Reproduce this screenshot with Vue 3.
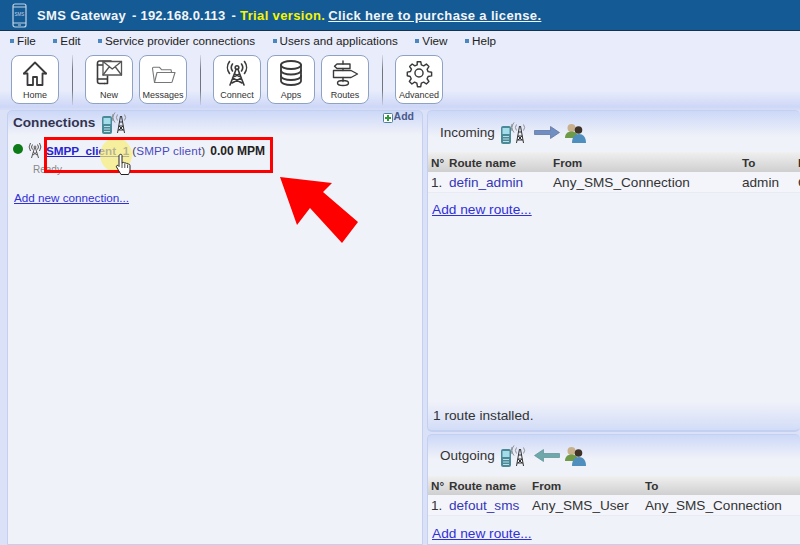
<template>
  <div class="page">
    <header class="topbar">
      <svg class="device" width="16" height="25" viewBox="0 0 16 25" fill="none" stroke="#c4d4e4" stroke-width="1.2">
        <rect x="1" y="1" width="13" height="23" rx="2" />
        <path d="M1 4h13M1 20h13M6 22h3" />
        <text x="7.500" y="13" font-size="4.500" fill="#c4d4e4" stroke="none" text-anchor="middle" font-family="Liberation Sans">SMS</text>
      </svg>
      <span class="title">SMS Gateway</span>
      <span class="title ip">- 192.168.0.113</span>
      <span class="title trial"><i>-</i> Trial version.</span>
      <a class="title buy">Click here to purchase a license.</a>
    </header>

    <nav class="menu">
      <span v-for="m in menu" :key="m" class="menu-item">{{ m }}</span>
    </nav>

    <div class="toolbar">
      <template v-for="(group, g) in toolbar" :key="g">
        <span v-if="g" class="sep"></span>
        <div class="tool-group">
          <button v-for="b in group" :key="b.label" class="tool">
            <svg width="30" height="30" viewBox="0 0 30 30" fill="none" stroke="#3a3a3a" stroke-width="1.6" stroke-linejoin="round" stroke-linecap="round">
              <g v-if="b.label === 'Home'" stroke-width="1.800">
                <path d="M4 15.500 15 4.500l11 11" />
                <path d="M4 15.500h3.500V27h5.500v-8h4v8h5.500V15.500H26" />
              </g>
              <g v-else-if="b.label === 'New'">
                <path d="M10.500 25.500H5.500a2 2 0 0 1-2-2V5a2 2 0 0 1 2-2H17" />
                <path d="M3.500 7H9M3.500 21h10M13.500 18v7.500h-3" />
                <rect x="9" y="3.500" width="18.500" height="13.500" stroke="#555" stroke-width="1.300" fill="#fff" />
                <path d="m9 3.500 9.250 7.500 9.250-7.500M9 17l6.500-8.500M27.500 17 21 8.500" stroke="#555" stroke-width="1.300" />
              </g>
              <g v-else-if="b.label === 'Messages'" stroke="#777" stroke-width="1.100">
                <path d="M6.500 24.500 4.500 10.500c0-.7.400-1.200 1-1.200h6l2 2.400h9.500l.5 2.500" />
                <path d="M6.500 24.500h16.500c.6 0 1-.3 1.200-.8l2.800-9.200H9L6.500 24.500z" />
              </g>
              <g v-else-if="b.label === 'Connect'">
                <circle cx="15" cy="9.500" r="1.800" />
                <path d="m14 11.500-6 15.500M16 11.500l6 15.500M10.500 20l9.500 5M19.500 20l-9.500 5M12.500 16l5 2.500M17.500 16l-5 2.500" />
                <path d="M10.500 6a6 6 0 0 0 0 7M19.500 6a6 6 0 0 1 0 7M7.500 3.500a10 10 0 0 0 0 12M22.500 3.500a10 10 0 0 1 0 12" />
              </g>
              <g v-else-if="b.label === 'Apps'" stroke-width="1.800">
                <ellipse cx="15" cy="7" rx="10" ry="4" />
                <path d="M5 7v16c0 2.200 4.500 4 10 4s10-1.800 10-4V7" />
                <path d="M5 12.500c0 2.200 4.500 4 10 4s10-1.800 10-4M5 18c0 2.200 4.500 4 10 4s10-1.800 10-4" />
              </g>
              <g v-else-if="b.label === 'Routes'" stroke-width="1.400">
                <path d="M13 3v3M13 10.500v2M13 19.500v4" />
                <path d="M7 6h13v4.500H7L4.500 8.250z" />
                <path d="M3.500 12.500H21l6.500 3.500-6.500 3.500H3.500z" />
                <ellipse cx="13" cy="25" rx="5.500" ry="2.500" />
              </g>
              <g v-else transform="translate(1.500 1.500) scale(.9)">
                <circle cx="15" cy="15" r="4.500" />
                <path d="M13 2.500h4l.6 3.500 2.600 1.100 3-2 2.800 2.800-2 3 1.100 2.600 3.900.7v4l-3.900.7-1.100 2.500 2 3-2.800 2.800-3-2-2.600 1.100-.7 3.900h-3.600l-.7-3.900-2.500-1.100-3 2-2.800-2.800 2-3-1.100-2.500L2 18v-4l3.500-.6 1.100-2.600-2-3 2.800-2.800 3 2 2.600-1.100z" />
              </g>
            </svg>
            <span>{{ b.label }}</span>
          </button>
        </div>
      </template>
    </div>

    <main class="content">
      <section class="panel connections">
        <div class="panel-head">
          <h2>Connections</h2>
          <svg class="gsm" width="26" height="22" viewBox="0 0 26 22">
            <use href="#gsm-icon" />
          </svg>
          <a class="add">
            <svg width="10" height="10" viewBox="0 0 10 10">
              <rect x=".5" y=".5" width="9" height="9" rx="1" fill="#fff" stroke="#4f7f9a" />
              <path d="M5 2v6M2 5h6" stroke="#2f9a3a" stroke-width="2" />
            </svg>
            <b>Add</b>
          </a>
        </div>
        <div class="conn">
          <span class="dot"></span>
          <svg class="tower" width="14" height="17" viewBox="0 0 14 17" fill="none" stroke="#555" stroke-width="1">
            <circle cx="7" cy="5" r="1" />
            <path d="M6.500 6 3.500 16M7.500 6l3 10M5 10l4 3M9 10l-4 3M4.500 2.500a4 4 0 0 0 0 5M9.500 2.500a4 4 0 0 1 0 5M2.500 1a7 7 0 0 0 0 8M11.500 1a7 7 0 0 1 0 8" />
          </svg>
          <div class="conn-text">
            <div class="conn-line">
              <a class="conn-name">SMPP_client_1</a>
              <span class="conn-type">(<em>SMPP client</em>)</span>
              <b class="rate">0.00 MPM</b>
            </div>
            <div class="status">Ready</div>
          </div>
        </div>
        <a class="link new-conn">Add new connection...</a>

        <!-- annotation drawn over the screenshot -->
        <div class="halo"></div>
        <div class="redbox"></div>
        <svg class="pointer" width="18" height="24" viewBox="0 0 18 24">
          <path d="M5 1.500c1-.6 2 0 2 1V10l1-.5c.8-.3 1.500 0 1.800.6.8-.4 1.600-.2 2 .5.800-.4 1.600-.1 2 .7.600-.100 1.200.3 1.200 1.200v4.500c0 2-1 3-1.500 4.500H6L1.500 14c-.5-1 .5-2 1.500-1.500L4 13.500V2.500c0-.4.500-.8 1-1z" fill="#fff" stroke="#222" stroke-width="1" />
          <path d="M7 10v5M9.800 10.500V15M12.600 11.500V15" stroke="#222" stroke-width=".8" fill="none" />
        </svg>
        <svg class="arrow" width="82" height="68" viewBox="0 0 82 68">
          <path d="M1 0 53 6 44 15 79 45 63 66 31 31 18 48z" fill="#fe0000" />
        </svg>
      </section>

      <div class="right">
        <section v-for="p in panels" :key="p.title" class="panel routes" :class="p.cls">
          <div class="route-head">
            <span class="route-title">{{ p.title }}</span>
            <svg width="26" height="22" viewBox="0 0 26 22"><use href="#gsm-icon" /></svg>
            <svg class="flow" width="26" height="13" viewBox="0 0 26 13">
              <path v-if="p.cls === 'in'" d="M.5 4.500h16V.5l9 6-9 6v-4H.5z" fill="#6f8fc4" stroke="#5a6f96" stroke-width=".7" />
              <path v-else d="M25.500 4.500h-16V.5l-9 6 9 6v-4h16z" fill="#6fa8aa" stroke="#5b8f92" stroke-width=".7" />
            </svg>
            <svg width="22" height="20" viewBox="0 0 22 20">
              <circle cx="6.500" cy="5" r="4" fill="#c9b08c" />
              <path d="M0 15c0-4.500 3-6.500 6.500-6.500S13 10.500 13 15z" fill="#6f9a48" />
              <circle cx="13.500" cy="7" r="3.800" fill="#3f3227" />
              <path d="M7 20c0-6 3-9 7-9s7 3 7 9z" fill="#4f8fbe" />
            </svg>
          </div>
          <table class="route-table">
            <colgroup>
              <col v-for="(w, i) in p.widths" :key="i" :style="{ width: w + 'px' }" />
            </colgroup>
            <thead>
              <tr><th v-for="h in p.headers" :key="h">{{ h }}</th></tr>
            </thead>
            <tbody>
              <tr>
                <td>1.</td>
                <td><a class="route-name">{{ p.name }}</a></td>
                <td>{{ p.from }}</td>
                <td>{{ p.to }}</td>
                <td v-if="p.extra">{{ p.extra }}</td>
              </tr>
            </tbody>
          </table>
          <a class="link new-route">Add new route...</a>
          <div v-if="p.foot" class="foot">{{ p.foot }}</div>
        </section>
      </div>
    </main>

    <svg width="0" height="0" class="defs">
      <defs>
        <g id="gsm-icon">
          <rect x="0" y="4" width="10" height="18" rx="2" fill="#4a8a98" />
          <rect x="1.500" y="6" width="7" height="6" fill="#a4dcea" />
          <path d="M2 14.500h6M2 17h6M2 19.500h6" stroke="#bcdde4" stroke-width="1" />
          <path d="M18.500 4l-3 17M19.500 4l3 17M17.500 10h3M16.800 14h4.400M16 18h6M17 14l4 4M21 14l-4 4" stroke="#333" stroke-width="1" fill="none" />
          <path d="M15.500 2.500a5 5 0 0 0 0 6M13 0.500a8 8 0 0 0 0 10M22.500 2.500a5 5 0 0 1 0 6M11 2a10 10 0 0 0 0 7" stroke="#888" stroke-width=".9" fill="none" />
        </g>
      </defs>
    </svg>
  </div>
</template>

<script setup>
const menu = ['File', 'Edit', 'Service provider connections', 'Users and applications', 'View', 'Help']

const toolbar = [
  [{ label: 'Home' }],
  [{ label: 'New' }, { label: 'Messages' }],
  [{ label: 'Connect' }, { label: 'Apps' }, { label: 'Routes' }],
  [{ label: 'Advanced' }],
]

const panels = [
  {
    title: 'Incoming',
    cls: 'in',
    headers: ['N°', 'Route name', 'From', 'To', 'Days'],
    widths: [18, 104, 189, 56, 80],
    name: 'defin_admin',
    from: 'Any_SMS_Connection',
    to: 'admin',
    extra: 'Only',
    foot: '1 route installed.',
  },
  {
    title: 'Outgoing',
    cls: 'out',
    headers: ['N°', 'Route name', 'From', 'To'],
    widths: [18, 83, 113, 233],
    name: 'defout_sms',
    from: 'Any_SMS_User',
    to: 'Any_SMS_Connection',
  },
]
</script>

<style>
html, body {
  margin: 0;
  overflow: hidden;
}
</style>

<style scoped>
.page {
  width: 800px;
  height: 545px;
  overflow: hidden;
  background: #e9edfb;
  font-family: "Liberation Sans", Arial, sans-serif;
  font-size: 11.7px;
  color: #222;
  display: flex;
  flex-direction: column;
}

.defs {
  position: absolute;
}

.topbar {
  height: 31px;
  flex: none;
  box-sizing: border-box;
  background: #145a94;
  border-bottom: 1px solid #12324e;
  padding-left: 12px;
  display: flex;
  align-items: center;
  white-space: pre;
}
.device {
  margin-right: 9px;
}
.title {
  font-size: 13px;
  font-weight: bold;
  color: #f2f5f8;
  letter-spacing: 0.35px;
}
.ip {
  margin-left: 6px;
  letter-spacing: 0.2px;
}
.trial {
  margin-left: 6px;
  color: #f6f600;
}
.trial i {
  font-style: normal;
  color: #f2f5f8;
}
.buy {
  margin-left: 3px;
  text-decoration: underline;
}

.menu {
  height: 19px;
  flex: none;
  padding-left: 10px;
  background: #e9edfb;
  display: flex;
  align-items: center;
  gap: 17.500px;
}
.menu-item {
  display: flex;
  align-items: center;
  gap: 3px;
}
.menu-item::before {
  content: "";
  width: 4px;
  height: 4px;
  background: #4a86c0;
}

.toolbar {
  height: 60px;
  flex: none;
  box-sizing: border-box;
  padding: 5px 0 0 11px;
  background: linear-gradient(#e9edfb 0, #e9edfb 40px, #cdd7f7 57px, #d7def6 60px);
  display: flex;
  gap: 12.500px;
}
.tool-group {
  display: flex;
  gap: 6px;
}
.sep {
  width: 1px;
  height: 50px;
  background: linear-gradient(#d8dcea, #70747e 30%, #70747e 70%, #c8cee0);
}
.tool {
  width: 48px;
  height: 49px;
  box-sizing: border-box;
  padding: 2px 0 0;
  background: #fff;
  border: 1px solid #8ea3c4;
  border-radius: 8px;
  font-family: inherit;
  font-size: 9px;
  color: #333;
  display: flex;
  flex-direction: column;
  align-items: center;
  gap: 2px;
}

.content {
  flex: 1;
  min-height: 0;
  padding: 0 0 0 7px;
  background: #dbe2f7;
  display: flex;
  gap: 4px;
}
.panel {
  position: relative;
  box-sizing: border-box;
  background: #f0f2f9;
  border: 1px solid #c4d0f0;
  border-radius: 5px 5px 0 0;
  background-image: linear-gradient(#ccd8f8 0, #f0f2f9 24px);
}
.connections {
  width: 416px;
}
.panel-head {
  display: flex;
  align-items: flex-start;
  padding: 4px 0 0 5px;
  height: 28px;
  box-sizing: border-box;
}
.panel-head h2 {
  margin: 0;
  font-size: 13.600px;
  font-weight: bold;
  line-height: 15px;
  color: #333350;
}
.gsm {
  margin: -3px 0 0 7px;
}
.add {
  margin-left: auto;
  margin-right: 8px;
  margin-top: -4px;
  height: 10px;
  display: flex;
  align-items: flex-start;
  gap: 1px;
  font-size: 10.500px;
  line-height: 10px;
  color: #4a5a8a;
}
.add svg {
  margin-top: 2px;
}
.conn {
  display: flex;
  align-items: flex-start;
  padding-left: 5px;
  margin-top: 4px;
}
.dot {
  width: 10px;
  height: 10px;
  margin: 1px 5px 0 0;
  border-radius: 50%;
  background: #0c7a16;
}
.tower {
  margin-top: -1px;
}
.conn-text {
  margin-left: 4px;
}
.conn-line {
  display: flex;
  align-items: baseline;
  white-space: pre;
  height: 16px;
  line-height: 16px;
}
.conn-name {
  color: #2525d0;
  font-weight: bold;
  text-decoration: underline;
}
.conn-type {
  margin-left: 3px;
  color: #444;
  letter-spacing: 0.15px;
}
.conn-type em {
  font-style: normal;
  color: #4a4ac0;
}
.rate {
  margin-left: 5px;
  font-size: 12px;
  color: #222;
}
.status {
  margin: 5px 0 0 -13px;
  font-size: 10px;
  color: #888;
}
.link {
  display: inline-block;
  color: #3030d8;
  text-decoration: underline;
}
.new-conn {
  margin: 16px 0 0 6px;
}

.halo {
  position: absolute;
  left: 92px;
  top: 27px;
  width: 32px;
  height: 34px;
  border-radius: 50%;
  background: rgba(248, 240, 120, 0.7);
}
.redbox {
  position: absolute;
  left: 36px;
  top: 26px;
  width: 229px;
  height: 36px;
  box-sizing: border-box;
  border: 3px solid #fe0000;
}
.pointer {
  position: absolute;
  left: 107px;
  top: 42px;
}
.arrow {
  position: absolute;
  left: 271px;
  top: 66px;
}

.right {
  flex: 1;
  min-width: 0;
  display: flex;
  flex-direction: column;
  gap: 2px;
}
.routes {
  border-right: 0;
  display: block;
}
.routes.in {
  height: 322px;
  border-radius: 5px;
  border-bottom: 2px solid #c4d0f0;
  background-image: linear-gradient(#ccd8f8 0, #f0f2f9 26px, #f0f2f9 290px, #d2dcf8 320px);
  position: relative;
}
.routes.out {
  flex: 1;
}
.route-head {
  height: 41px;
  box-sizing: border-box;
  padding-left: 12px;
  display: flex;
  align-items: center;
}
.routes.in .route-head {
  padding-top: 2px;
}
.route-title {
  font-size: 13.500px;
  margin-right: 6px;
  color: #333;
}
.flow {
  margin: 0 5px 0 7px;
}
.route-table {
  border-collapse: collapse;
  table-layout: fixed;
  width: 447px;
}
.route-table th {
  height: 19px;
  padding: 0 0 0 3px;
  text-align: left;
  font-size: 11.700px;
  font-weight: bold;
  color: #333;
  background: linear-gradient(#f0f0f0, #cfcfcf);
}
.routes.in th {
  height: 20px;
}
.route-table td {
  height: 20px;
  padding: 0 0 0 3px;
  font-size: 13.600px;
  white-space: nowrap;
  overflow: hidden;
  background: #f3f5fb;
  color: #333;
  border-bottom: 1px solid #e8ebf4;
}
.route-name {
  color: #3636b8;
}
.new-route {
  margin: 9px 0 0 4px;
  font-size: 13.700px;
}
.routes.out .new-route {
  margin-top: 10px;
}
.foot {
  position: absolute;
  left: 5px;
  bottom: 7px;
  font-size: 13.700px;
  color: #333;
}
</style>
